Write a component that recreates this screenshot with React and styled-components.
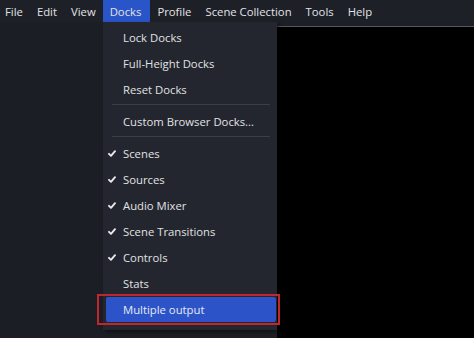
import React from 'react';
import styled, { createGlobalStyle } from 'styled-components';

const GlobalStyle = createGlobalStyle`
  html, body {
    margin: 0;
    padding: 0;
    background: #1d1f26;
    font-family: "Open Sans", "Noto Sans", sans-serif;
  }
`;

const menus = ['File', 'Edit', 'View', 'Docks', 'Profile', 'Scene Collection', 'Tools', 'Help'];

const items = [
  { label: 'Lock Docks' },
  { label: 'Full-Height Docks' },
  { label: 'Reset Docks' },
  { sep: true },
  { label: 'Custom Browser Docks...' },
  { sep: true },
  { label: 'Scenes', checked: true },
  { label: 'Sources', checked: true },
  { label: 'Audio Mixer', checked: true },
  { label: 'Scene Transitions', checked: true },
  { label: 'Controls', checked: true },
  { label: 'Stats' },
  { label: 'Multiple output', active: true },
];

const Check = () => (
  <svg width="8" height="7" viewBox="0 0 8 7">
    <path d="M1 3.8 L3 5.8 L7 1.2" fill="none" stroke="#e8e9ec" strokeWidth="1.9" strokeLinecap="round" strokeLinejoin="round" />
  </svg>
);

export default function App() {
  return (
    <Window>
      <GlobalStyle />
      <MenuBar>
        {menus.map((m) => (
          <MenuTitle key={m} open={m === 'Docks'}>{m}</MenuTitle>
        ))}
      </MenuBar>
      <Body>
        <LeftPane />
        <Dropdown>
          {items.map((it, i) => {
            if (it.sep) return <Separator key={i} />;
            if (it.active)
              return (
                <Highlight key={i}>
                  <ActiveItem>{it.label}</ActiveItem>
                </Highlight>
              );
            return (
              <Item key={i}>
                <CheckSlot>{it.checked && <Check />}</CheckSlot>
                {it.label}
              </Item>
            );
          })}
        </Dropdown>
        <Preview />
      </Body>
    </Window>
  );
}

const Window = styled.div`
  width: 474px;
  height: 338px;
  display: flex;
  flex-direction: column;
  overflow: hidden;
  background: #1d1f26;
`;

const MenuBar = styled.div`
  height: 22px;
  display: flex;
  align-items: stretch;
  background: #1e2028;
`;

const MenuTitle = styled.div`
  display: flex;
  align-items: center;
  padding: 0 7px;
  font-size: 11.3px;
  color: #e2e3e6;
  background: ${(p) => (p.open ? '#2a55c9' : 'transparent')};
  ${(p) => p.open && 'padding-right: 9px;'}
  &:first-child {
    padding-left: 5px;
  }
`;

const Body = styled.div`
  flex: 1;
  display: flex;
  align-items: stretch;
`;

const LeftPane = styled.div`
  width: 103px;
  background: #1c1e25;
`;

const Dropdown = styled.div`
  width: 174px;
  height: 308px;
  background: #23262e;
  padding-top: 2px;
  display: flex;
  flex-direction: column;
  box-sizing: border-box;
  box-shadow: 2px 2px 4px rgba(0, 0, 0, 0.5);
  z-index: 1;
`;

const Item = styled.div`
  height: 26px;
  display: flex;
  align-items: center;
  padding-left: 5px;
  font-size: 11.3px;
  color: #e1e2e5;
`;

const CheckSlot = styled.span`
  width: 15px;
  display: inline-flex;
  align-items: center;
`;

const Highlight = styled.div`
  margin: -2px -3px 0 -6px;
  padding: 1px 2px 1px 7px;
  border: 2px solid #c0262e;
`;

const ActiveItem = styled.div`
  height: 25px;
  display: flex;
  align-items: center;
  padding-left: 17px;
  font-size: 11.3px;
  color: #e6e9f2;
  background: #2c54c8;
  border-radius: 2px;
`;

const Separator = styled.div`
  height: 1px;
  margin: 2px 7px 3px 9px;
  background: #3b3e47;
`;

const Preview = styled.div`
  flex: 1;
  margin-top: 4px;
  background: #000;
  border-top: 1px solid #555860;
`;
